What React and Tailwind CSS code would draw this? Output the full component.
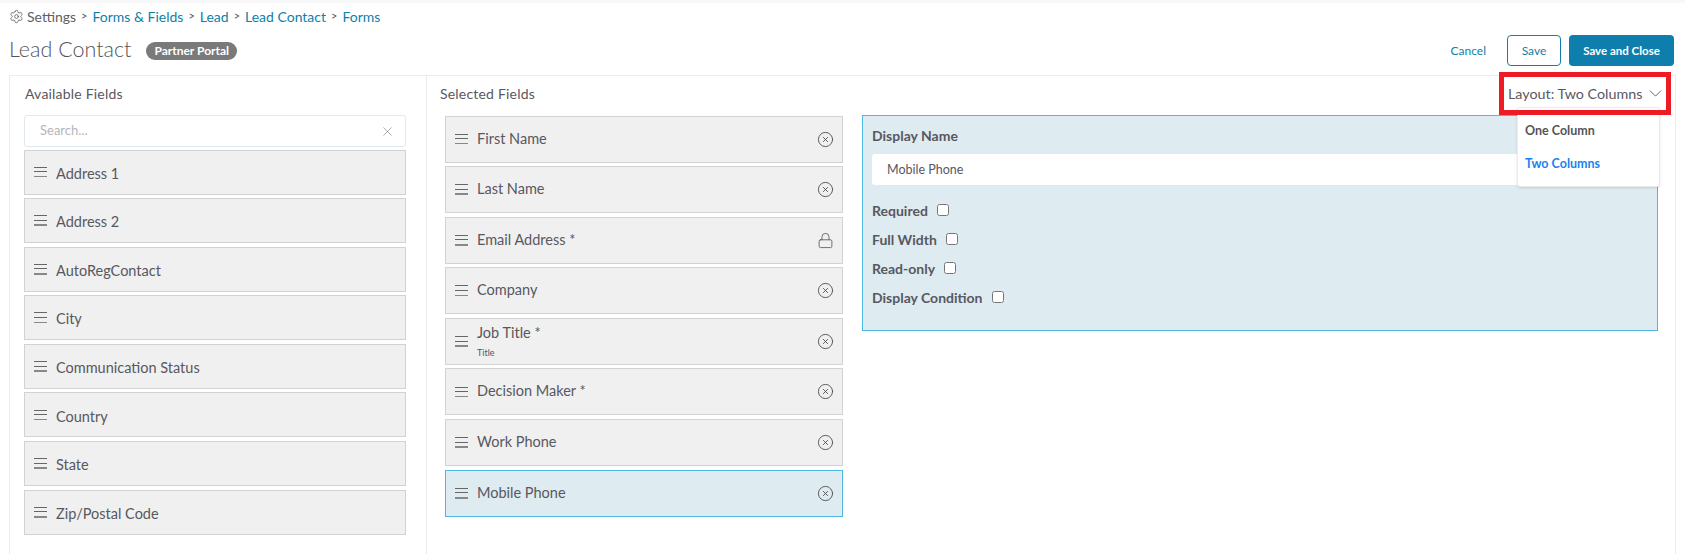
import React from 'react';
import { Settings, X, CircleX, Lock, ChevronDown } from 'lucide-react';

const availableFields = ['Address 1', 'Address 2', 'AutoRegContact', 'City', 'Communication Status', 'Country', 'State', 'Zip/Postal Code'];

const selectedFields = [
  { name: 'First Name' },
  { name: 'Last Name' },
  { name: 'Email Address *', locked: true },
  { name: 'Company' },
  { name: 'Job Title *', sub: 'Title' },
  { name: 'Decision Maker *' },
  { name: 'Work Phone' },
  { name: 'Mobile Phone', active: true },
];

function DragHandle() {
  return (
    <div className="flex flex-col gap-[3.6px] w-[13px] shrink-0">
      <div className="h-px bg-[#666]"></div>
      <div className="h-px bg-[#666]"></div>
      <div className="h-[1.5px] bg-[#888]"></div>
    </div>
  );
}

function AvailableRow({ name }) {
  return (
    <div className="h-[45px] flex items-center gap-[9px] pl-[9px] bg-[#f0f0f0] border border-[#d2d2d2] text-[14.5px] text-[#58585f]">
      <DragHandle />
      <span className="pt-[3px]">{name}</span>
    </div>
  );
}

function SelectedRow({ name, sub, locked, active }) {
  return (
    <div className={`h-[47px] flex items-center pl-[9px] pr-[8px] border ${active ? 'bg-[#deebf0] border-[#4db8e4]' : 'bg-[#f0f0f0] border-[#d2d2d2]'}`}>
      <DragHandle />
      <div className="ml-[9px] flex-1 text-[14.5px] text-[#58585f]">
        <div className={sub ? 'leading-[22px]' : 'leading-[22px] -mt-px'}>{name}</div>
        {sub && <div className="text-[9px] leading-[17px] text-[#555]">{sub}</div>}
      </div>
      {locked ? (
        <Lock size={17} strokeWidth={1.2} className="text-[#5a5a60]" />
      ) : (
        <CircleX size={17} strokeWidth={1.2} className="text-[#444]" />
      )}
    </div>
  );
}

function CheckField({ label }) {
  return (
    <label className="flex items-center gap-[9px] font-bold text-[14px] leading-[20px] text-[#58585f]">
      {label}
      <input type="checkbox" className="w-[12px] h-[12px] -mt-[2px]" />
    </label>
  );
}

export default function App() {
  return (
    <div className="relative h-[554px] overflow-hidden bg-white font-['Lato',sans-serif] border-t-[3px] border-[#f8f8f8]">
      <div className="pl-[9px] pr-[9px]">
        <div className="flex items-center h-[26px] text-[14px] text-[#0f7fa8]">
          <Settings size={15} strokeWidth={1.1} className="text-[#444] mr-[3px]" />
          <span className="text-[#5f5f5f]">Settings</span>
          <span className="text-[#555] text-[11px] mx-[5px]">&gt;</span>
          <span>Forms &amp; Fields</span>
          <span className="text-[#555] text-[11px] mx-[5px]">&gt;</span>
          <span>Lead</span>
          <span className="text-[#555] text-[11px] mx-[5px]">&gt;</span>
          <span>Lead Contact</span>
          <span className="text-[#555] text-[11px] mx-[5px]">&gt;</span>
          <span>Forms</span>
        </div>
        <div className="flex items-center justify-between h-[43px] pr-[2px]">
          <div className="flex items-center">
            <h1 className="text-[21.5px] font-light text-[#555] -mt-[2px]">Lead Contact</h1>
            <span className="ml-[15px] px-[8px] h-[18px] leading-[18px] rounded-full bg-[#7a7a7a] text-white text-[12px] font-bold">Partner Portal</span>
          </div>
          <div className="flex items-center text-[12px]">
            <span className="text-[#0f7fa8] mr-[21px]">Cancel</span>
            <button className="w-[54px] h-[31px] rounded-[4px] border border-[#0f7fa8] text-[#0f7fa8] mr-[8px]">Save</button>
            <button className="w-[105px] h-[31px] rounded-[4px] bg-[#0e7fad] text-white text-[11.5px] font-bold">Save and Close</button>
          </div>
        </div>
        <div className="flex h-[480px] mt-[3px] border border-[#ececec] w-[1667px]">
          <div className="w-[417px] shrink-0 border-r border-[#ececec] pl-[14px] pr-[20px]">
            <div className="h-[39px] flex items-center pl-px pb-[5px] text-[14px] text-[#58585f] tracking-[0.2px]">Available Fields</div>
            <div className="h-[32px] flex items-center justify-between pl-[15px] pr-[10px] border border-[#e1e8ee] rounded-[3px] text-[13px] text-[#b5b5bb]">
              <span>Search...</span>
              <X size={15} strokeWidth={1} className="text-[#777]" />
            </div>
            <div className="flex flex-col gap-[3.6px] mt-[2.5px]">
              {availableFields.map((name) => <AvailableRow key={name} name={name} />)}
            </div>
          </div>
          <div className="flex-1 pl-[13px]">
            <div className="h-[39px] flex items-center pb-[5px] text-[14px] text-[#58585f] tracking-[0.2px]">Selected Fields</div>
            <div className="flex pl-[5px] items-start">
              <div className="w-[398px] flex flex-col gap-[3.6px] mt-[0.5px]">
                {selectedFields.map((f) => <SelectedRow key={f.name} {...f} />)}
              </div>
              <div className="ml-[19px] w-[796px] h-[216px] bg-[#deebf0] border border-[#4db8e4] pl-[9px] pr-[12px]">
                <div className="font-bold text-[14px] text-[#58585f] leading-[20px] mt-[10px]">Display Name</div>
                <div className="h-[31px] mt-[8px] flex items-center pl-[15px] pt-px bg-white rounded-[3px] text-[12.5px] text-[#58585f]">Mobile Phone</div>
                <div className="flex flex-col gap-[9px] mt-[16px]">
                  <CheckField label="Required" />
                  <CheckField label="Full Width" />
                  <CheckField label="Read-only" />
                  <CheckField label="Display Condition" />
                </div>
              </div>
            </div>
          </div>
        </div>
      </div>

      <div className="absolute left-[1517px] top-[104px] w-[143px] h-[80px] bg-white border border-[#ececec] rounded-[3px] shadow-sm pl-[7px] pt-[7px] text-[12.5px] font-bold">
        <div className="h-[33px] flex items-center text-[#555]">One Column</div>
        <div className="h-[33px] flex items-center text-[#1a82f0]">Two Columns</div>
      </div>
      <div className="absolute left-[1499px] top-[69px] w-[172px] h-[43px] border-[5px] border-[#ed1c24] flex items-center justify-between pl-[4px] pr-0 text-[14.3px] text-[#58585f] whitespace-nowrap">
        <span>Layout: Two Columns</span>
        <ChevronDown size={21} strokeWidth={1} className="text-[#555]" />
      </div>
    </div>
  );
}
